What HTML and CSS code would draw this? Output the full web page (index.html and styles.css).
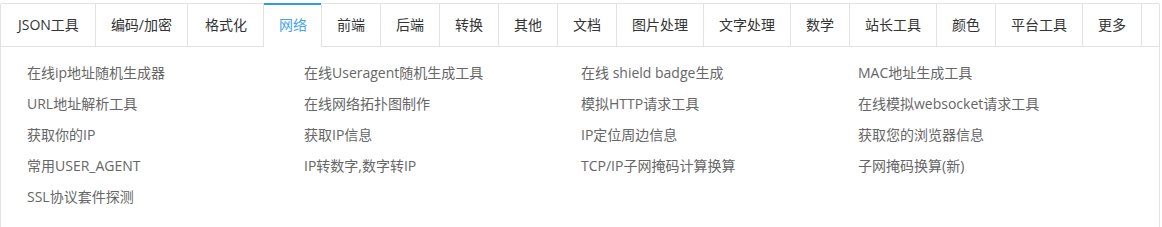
FILE: index.html
```html
<!doctype html>
<html>
<head>
<meta charset="utf-8">
<title>网络工具</title>
<link rel="stylesheet" href="styles.css">
</head>
<body>
<div class="tab-card">
    <ul class="tab-title">
        <li class="wide">JSON工具</li>
        <li>编码/加密</li>
        <li class="wide">格式化</li>
        <li class="this">网络</li>
        <li>前端</li>
        <li>后端</li>
        <li>转换</li>
        <li>其他</li>
        <li>文档</li>
        <li>图片处理</li>
        <li>文字处理</li>
        <li>数学</li>
        <li>站长工具</li>
        <li>颜色</li>
        <li>平台工具</li>
        <li>更多</li>
    </ul>
    <div class="tab-content">
        <a href="javascript:;">在线ip地址随机生成器</a>
        <a href="javascript:;">在线Useragent随机生成工具</a>
        <a href="javascript:;">在线 shield badge生成</a>
        <a href="javascript:;">MAC地址生成工具</a>
        <a href="javascript:;">URL地址解析工具</a>
        <a href="javascript:;">在线网络拓扑图制作</a>
        <a href="javascript:;">模拟HTTP请求工具</a>
        <a href="javascript:;">在线模拟websocket请求工具</a>
        <a href="javascript:;">获取你的IP</a>
        <a href="javascript:;">获取IP信息</a>
        <a href="javascript:;">IP定位周边信息</a>
        <a href="javascript:;">获取您的浏览器信息</a>
        <a href="javascript:;">常用USER_AGENT</a>
        <a href="javascript:;">IP转数字,数字转IP</a>
        <a href="javascript:;">TCP/IP子网掩码计算换算</a>
        <a href="javascript:;">子网掩码换算(新)</a>
        <a href="javascript:;">SSL协议套件探测</a>
    </div>
</div>
</body>
</html>
```

FILE: styles.css
```css
body{
    margin:0;
    background:#fff;
    font-family:"Open Sans","Noto Sans CJK SC",sans-serif;
    font-size:14px;
    }
ul{
    margin:0;
    padding:0;
    }
li{
    list-style:none;
    }
a{
    text-decoration:none;
    }
.tab-card{
    width:1158px;
    height:240px;
    margin-top:3px;
    border:1px solid #e2e2e2;
    border-radius:2px;
    }
.tab-title{
    display:flex;
    border-bottom:1px solid #e2e2e2;
    height:42px;
    }
.tab-title li{
    position:relative;
    height:42px;
    line-height:42px;
    padding:0 15px;
    border-right:1px solid #e2e2e2;
    color:#333;
    white-space:nowrap;
    cursor:pointer;
    }
.tab-title li.wide{
    padding:0 16px 0 17px;
    }
.tab-title li.this{
    color:#43a3ee;
    height:43px;
    padding:0 14px 0 15px;
    background:#fff;
    }
.tab-title li.this:after{
    content:"";
    position:absolute;
    left:0;
    right:0;
    top:-1px;
    height:2px;
    background:#2f9ce3;
    }
.tab-content{
    display:grid;
    grid-template-columns:repeat(4,277px);
    padding:10px 0 0 26px;
    }
.tab-content a{
    line-height:31px;
    color:#666;
    white-space:nowrap;
    }
```
